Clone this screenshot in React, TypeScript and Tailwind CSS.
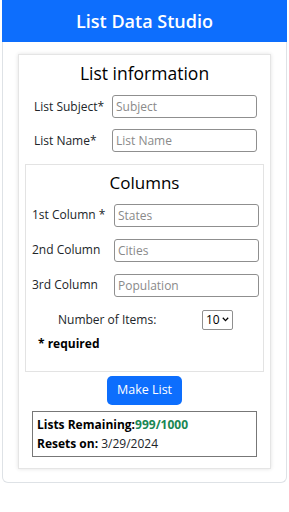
import React, { useState } from 'react';

const fieldRow = 'flex items-center';

export default function App() {
  const [count, setCount] = useState('10');
  return (
    <div className="min-h-[512px] bg-white pt-0" style={{ fontFamily: '"Open Sans", "Noto Sans", sans-serif' }}>
      <div className="mx-[2px] rounded-b-[6px] border border-t-0 border-[#dee2e6] pb-[13px]">
        <div className="flex h-[42px] items-center justify-center bg-[#0d6efd] text-[18px] font-semibold text-white -mx-px">
          List Data Studio
        </div>
        <div className="mx-[15px] mt-[12px] border border-[#e5e5e5] bg-white px-[6px] pb-[11px] shadow-[0_0_4px_rgba(0,0,0,0.12)]">
          <h2 className="mt-[5px] text-center text-[17.5px] font-medium text-black">List information</h2>
          <div className="mt-[9px] flex flex-col gap-[11px] px-[9px] text-[12px] text-[#212529]">
            <div className={fieldRow}>
              <label className="w-[78px] shrink-0">List Subject*</label>
              <input placeholder="Subject" className="h-[23px] w-[145px] rounded-[3px] border border-[#8f8f8f] px-[3px] text-[12px] placeholder:text-[#8a8a8a]" />
            </div>
            <div className={fieldRow}>
              <label className="w-[78px] shrink-0">List Name*</label>
              <input placeholder="List Name" className="h-[23px] w-[145px] rounded-[3px] border border-[#8f8f8f] px-[3px] text-[12px] placeholder:text-[#8a8a8a]" />
            </div>
          </div>
          <div className="mt-[12px] border border-[#e3e3e3] px-[6px] pb-[18px]">
            <h3 className="mt-[5px] text-center text-[17px] font-medium text-black">Columns</h3>
            <div className="mt-[8px] flex flex-col gap-[12px] text-[12px] text-[#212529]">
              {[
                ['1st Column *', 'States'],
                ['2nd Column', 'Cities'],
                ['3rd Column', 'Population'],
              ].map(([label, ph]) => (
                <div key={label} className={fieldRow}>
                  <label className="w-[82px] shrink-0">{label}</label>
                  <input placeholder={ph} className="h-[23px] w-[145px] rounded-[3px] border border-[#8f8f8f] px-[3px] text-[12px] placeholder:text-[#8a8a8a]" />
                </div>
              ))}
            </div>
            <div className="mt-[13px] flex items-center text-[12px] text-[#212529]">
              <span className="ml-[26px] w-[144px]">Number of Items:</span>
              <div className="relative">
                <select
                  value={count}
                  onChange={e => setCount(e.target.value)}
                  className="h-[20px] w-[31px] appearance-none rounded-[2px] border border-[#8f8f8f] pl-[3px] text-[12px] text-black"
                >
                  <option>5</option>
                  <option>10</option>
                  <option>20</option>
                </select>
                <svg className="pointer-events-none absolute right-[4px] top-[7px]" width="7" height="5" viewBox="0 0 7 5">
                  <path d="M0.8 0.8 L3.5 3.6 L6.2 0.8" fill="none" stroke="#000" strokeWidth="1.3" />
                </svg>
              </div>
            </div>
            <p className="ml-[6px] mt-[5px] text-[12px] font-bold text-black">* required</p>
          </div>
          <div className="mt-[4px] flex justify-center">
            <button className="h-[29px] rounded-[5px] bg-[#0d6efd] px-[10px] text-[12.5px] text-white">Make List</button>
          </div>
          <div className="mx-[7px] mt-[6px] border border-[#777] px-[4px] py-[3px] text-[12px] leading-[19px] text-[#212529]">
            <div>
              <span className="font-bold text-black">Lists Remaining:</span>
              <span className="font-bold text-[#198754]">999/1000</span>
            </div>
            <div>
              <span className="font-bold text-black">Resets on:</span> 3/29/2024
            </div>
          </div>
        </div>
      </div>
    </div>
  );
}
